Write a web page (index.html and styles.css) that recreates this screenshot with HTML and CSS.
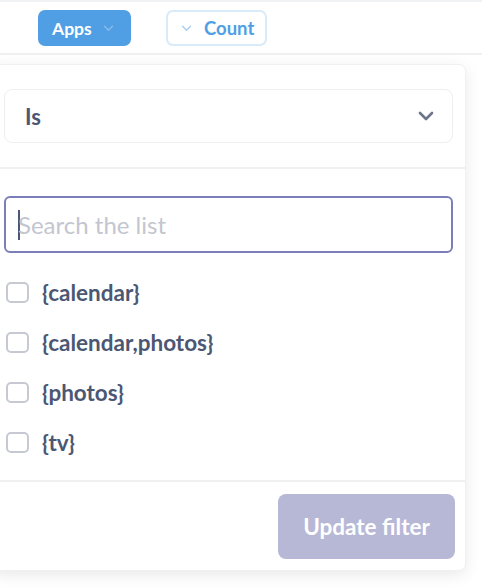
FILE: index.html
```html
<!DOCTYPE html>
<html>
<head>
<meta charset="utf-8">
<link rel="stylesheet" href="styles.css">
</head>
<body>
<header class="bar">
  <button class="pill pill-apps">Apps
    <svg class="chev chev-apps" viewBox="0 0 12 8" width="11" height="7"><path d="M1.5 1.5 L6 6 L10.5 1.5" fill="none" stroke="currentColor" stroke-width="1.6" stroke-linecap="round" stroke-linejoin="round"/></svg>
  </button>
  <button class="pill pill-count">
    <svg class="chev chev-count" viewBox="0 0 12 8" width="11" height="7"><path d="M1.5 1.5 L6 6 L10.5 1.5" fill="none" stroke="currentColor" stroke-width="1.6" stroke-linecap="round" stroke-linejoin="round"/></svg>
    Count
  </button>
</header>

<div class="popover">
  <section class="op-section">
    <div class="select">
      <span class="select-label">Is</span>
      <svg class="select-chev" viewBox="0 0 16 10" width="16" height="10"><path d="M2 2 L8 8 L14 2" fill="none" stroke="currentColor" stroke-width="2.6" stroke-linecap="round" stroke-linejoin="round"/></svg>
    </div>
  </section>
  <section class="values">
    <div class="search">
      <span class="caret"></span>
      <span class="placeholder">Search the list</span>
    </div>
    <ul class="options">
      <li class="option"><span class="box"></span><span class="opt-label">{calendar}</span></li>
      <li class="option"><span class="box"></span><span class="opt-label">{calendar,photos}</span></li>
      <li class="option"><span class="box"></span><span class="opt-label">{photos}</span></li>
      <li class="option"><span class="box"></span><span class="opt-label">{tv}</span></li>
    </ul>
  </section>
  <footer class="foot">
    <button class="update">Update filter</button>
  </footer>
</div>
</body>
</html>
```

FILE: styles.css
```css
* { box-sizing: border-box; }
html, body {
  margin: 0;
  padding: 0;
  background: #ffffff;
  font-family: Lato, "Open Sans", "Liberation Sans", sans-serif;
  color: #4c5773;
}
body { position: relative; width: 482px; height: 588px; overflow: hidden; }

.bar {
  height: 55px;
  border-top: 2px solid #f0f1f3;
  border-bottom: 2px solid #eef0f2;
  display: flex;
  align-items: flex-start;
  padding: 8px 0 0 38px;
  gap: 35px;
}
.pill {
  height: 36px;
  border-radius: 7px;
  font-family: inherit;
  font-weight: 700;
  font-size: 17.5px;
  display: flex;
  align-items: center;
  padding: 0;
}
.pill-apps {
  width: 93px;
  background: #509ee3;
  color: #ffffff;
  border: none;
  padding-left: 14px;
}
.chev-apps { color: #86bdeb; margin-left: 11px; }
.pill-count {
  width: 101px;
  background: #ffffff;
  color: #509ee3;
  border: 2px solid #d9eaf9;
  padding-left: 13px;
  font-size: 18.5px;
}
.chev-count { color: #a9cff1; margin-right: 12px; }

.popover {
  position: absolute;
  left: -9px;
  top: 64px;
  width: 475px;
  height: 507px;
  background: #ffffff;
  border: 1px solid #eff0f2;
  border-radius: 7px;
  box-shadow: 0 4px 16px rgba(0, 0, 0, 0.09);
  display: flex;
  flex-direction: column;
}
.op-section {
  padding: 24px 12px 24px 12px;
  border-bottom: 2px solid #f0f0f0;
}
.select {
  height: 54px;
  border: 1.5px solid #eeeff1;
  border-radius: 8px;
  display: flex;
  align-items: center;
  justify-content: space-between;
  padding: 0 18px 0 20px;
}
.select-label { font-weight: 700; font-size: 22px; color: #4c5773; }
.select-chev { color: #6c7489; }

.values {
  padding: 27px 12px 0 12px;
  border-bottom: 2px solid #f0f0f0;
  height: 313px;
}
.search {
  height: 57px;
  border: 2px solid #7c7eb9;
  border-radius: 6px;
  display: flex;
  align-items: center;
  padding-left: 12px;
  position: relative;
}
.caret {
  width: 2px;
  height: 30px;
  background: #4c5773;
  margin-right: -2px;
}
.placeholder {
  font-size: 24px;
  color: #c3c6cf;
}
.options {
  list-style: none;
  margin: 28px 0 0 0;
  padding: 0;
  display: flex;
  flex-direction: column;
  gap: 28px;
}
.option {
  display: flex;
  align-items: center;
  height: 22px;
  padding-left: 2px;
}
.box {
  width: 23px;
  height: 21px;
  border: 2.5px solid #c6c9d2;
  border-radius: 5px;
  margin-right: 13px;
}
.opt-label { font-weight: 700; font-size: 22.5px; color: #4c5773; }

.foot {
  flex: 1;
  display: flex;
  justify-content: flex-end;
  align-items: flex-start;
  padding: 12px 10px 0 0;
}
.update {
  width: 177px;
  height: 65px;
  border: none;
  border-radius: 8px;
  background: #b7b8d6;
  color: #ffffff;
  font-family: inherit;
  font-weight: 700;
  font-size: 22.5px;
}
```
